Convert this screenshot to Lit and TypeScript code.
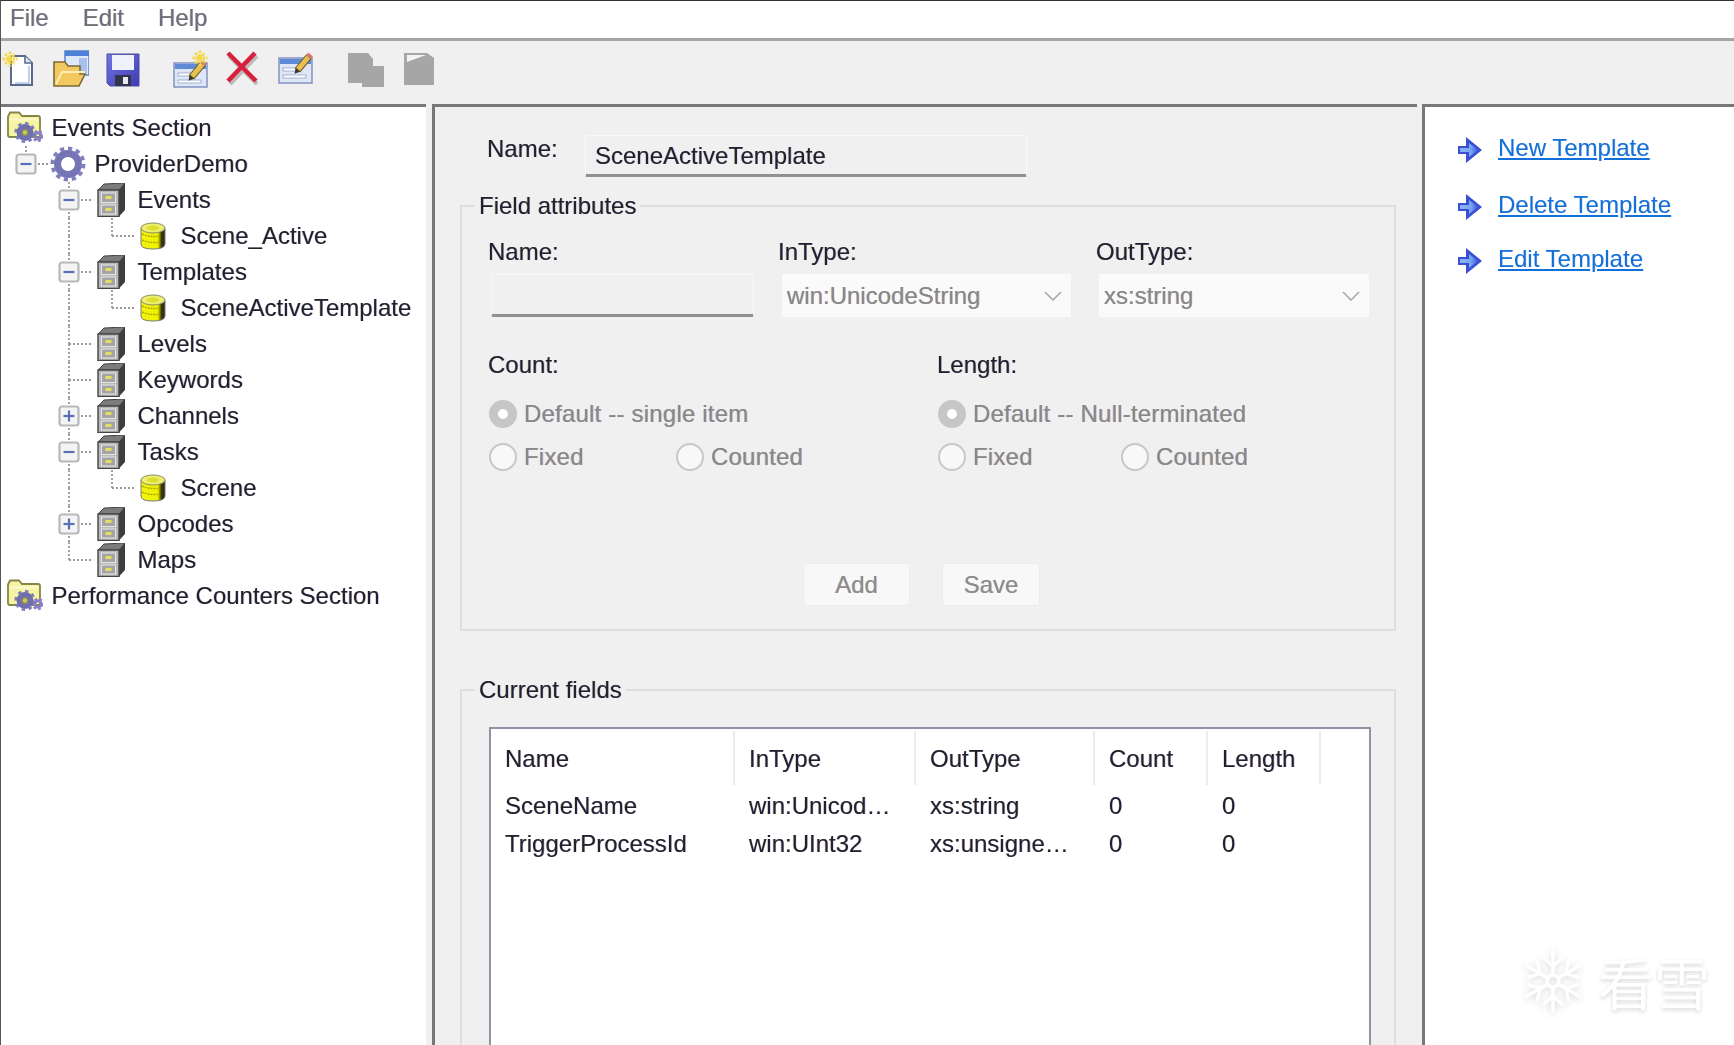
import { LitElement, css, html, svg } from 'lit';
import { customElement } from 'lit/decorators.js';

// tree guide cell: L/T/v are the dotted lines, +/- the expander box
const guide = (code: string) => {
  const kind = code[0] ?? '';
  const box = code[1];
  const up = kind === 'L' || kind === 'T' || kind === 'v';
  const down = kind === 'T' || kind === 'v';
  const right = kind === 'L' || kind === 'T';
  return html`<svg class="cell" width="43" height="36" viewBox="0 0 43 36">
    <g stroke="#9a9a9a" stroke-width="1.8" stroke-dasharray="2 2" fill="none">
      ${up ? svg`<line x1="19" y1="0" x2="19" y2="18"></line>` : ''}
      ${down ? svg`<line x1="19" y1="18" x2="19" y2="36"></line>` : ''}
      ${right ? svg`<line x1="19" y1="18" x2="43" y2="18"></line>` : ''}
    </g>
    ${box
      ? svg`<rect x="9.5" y="8.5" width="19" height="19" rx="2.5" fill="#f4f4f4" stroke="#b8b8b8" stroke-width="2.2"></rect>
        <line x1="13.5" y1="18" x2="24.5" y2="18" stroke="#5b70b4" stroke-width="2.2"></line>
        ${box === '+' ? svg`<line x1="19" y1="12.5" x2="19" y2="23.5" stroke="#5b70b4" stroke-width="2.2"></line>` : ''}`
      : ''}
  </svg>`;
};

const miniGear = svg`
  <circle cx="31" cy="26" r="3.2" fill="none" stroke="#8a7ec8" stroke-width="3"></circle>
  <circle cx="31" cy="26" r="5.2" fill="none" stroke="#8a7ec8" stroke-width="2" pathLength="100" stroke-dasharray="8 8"></circle>
  <circle cx="18" cy="22.5" r="6" fill="#8c8c50" stroke="#6f6fb0" stroke-width="5"></circle>
  <circle cx="18" cy="22.5" r="9.3" fill="none" stroke="#7a7abc" stroke-width="2.6" pathLength="100" stroke-dasharray="6 6.5"></circle>
  <circle cx="18" cy="22.5" r="2.2" fill="#c8c860"></circle>`;

const icons: Record<string, unknown> = {
  folder: html`<svg width="36" height="36" viewBox="0 0 36 36">
    <path d="M1 6.5 L3 2.5 H12 L15 6 H31 Q33 6 33 8 V27 H3 Q1 27 1 25 Z" fill="#f6f3a2" stroke="#85854a" stroke-width="1.8"></path>
    <path d="M3 9.5 H31" stroke="#fbf9cf" stroke-width="2"></path>
    ${miniGear}
  </svg>`,
  gear: html`<svg width="36" height="36" viewBox="0 0 36 36">
    <circle cx="18" cy="18" r="10.5" fill="none" stroke="#7575b6" stroke-width="7"></circle>
    <circle cx="18" cy="18" r="15.5" fill="none" stroke="#8080c0" stroke-width="4" pathLength="100" stroke-dasharray="4.4 3.93"></circle>
  </svg>`,
  cabinet: html`<svg class="inset" width="28" height="34" viewBox="0 0 28 34">
    <path d="M1 7 L7 1 L28 0 L22 7 Z" fill="#7c7c7c" stroke="#444" stroke-width="1"></path>
    <path d="M22 7 L28 0 V27 L22 33.5 Z" fill="#3e3e3e"></path>
    <rect x="1" y="7" width="21" height="26.5" fill="#b8b8b8" stroke="#444" stroke-width="1.4"></rect>
    <rect x="4.5" y="10" width="14" height="9.5" fill="#a4a4a4" stroke="#e6e6e6" stroke-width="1"></rect>
    <rect x="4.5" y="22" width="14" height="9" fill="#a4a4a4" stroke="#e6e6e6" stroke-width="1"></rect>
    <rect x="8.5" y="13" width="6" height="3" fill="#e0e060"></rect>
    <rect x="8.5" y="25" width="6" height="3" fill="#e0e060"></rect>
  </svg>`,
  db: html`<svg class="inset" width="26" height="28" viewBox="0 0 26 28">
    <defs><linearGradient id="dbFill" x1="0" x2="1" y1="0" y2="0">
      <stop offset="0" stop-color="#f4f410"></stop>
      <stop offset=".7" stop-color="#f0f000"></stop>
      <stop offset=".85" stop-color="#3a3a10"></stop>
      <stop offset="1" stop-color="#2a2a10"></stop>
    </linearGradient></defs>
    <path d="M1 6 V22 Q1 27 13 27 Q25 27 25 22 V6 Z" fill="url(#dbFill)" stroke="#777" stroke-width="1"></path>
    <path d="M2 12 Q8 15 18 14.5 M2 18 Q8 21 18 20.5" stroke="#a8a800" stroke-width="1.4" stroke-dasharray="2 1" fill="none"></path>
    <ellipse cx="13" cy="6" rx="12" ry="5" fill="#eded70" stroke="#8c8c6c" stroke-width="1"></ellipse>
    <ellipse cx="13" cy="6" rx="6" ry="2.4" fill="#dede30"></ellipse>
  </svg>`,
};

const tree: { label: string; icon: string; cells: string[] }[] = [
  { label: 'Events Section', icon: 'folder', cells: [] },
  { label: 'ProviderDemo', icon: 'gear', cells: ['L-'] },
  { label: 'Events', icon: 'cabinet', cells: ['', 'T-'] },
  { label: 'Scene_Active', icon: 'db', cells: ['', 'v', 'L'] },
  { label: 'Templates', icon: 'cabinet', cells: ['', 'T-'] },
  { label: 'SceneActiveTemplate', icon: 'db', cells: ['', 'v', 'L'] },
  { label: 'Levels', icon: 'cabinet', cells: ['', 'T'] },
  { label: 'Keywords', icon: 'cabinet', cells: ['', 'T'] },
  { label: 'Channels', icon: 'cabinet', cells: ['', 'T+'] },
  { label: 'Tasks', icon: 'cabinet', cells: ['', 'T-'] },
  { label: 'Screne', icon: 'db', cells: ['', 'v', 'L'] },
  { label: 'Opcodes', icon: 'cabinet', cells: ['', 'T+'] },
  { label: 'Maps', icon: 'cabinet', cells: ['', 'L'] },
  { label: 'Performance Counters Section', icon: 'folder', cells: [] },
];

const sparkle = (x: number, y: number) => svg`
  <g transform="translate(${x} ${y})" stroke="#f4d84a" stroke-width="2.8" stroke-dasharray="2.6 .8">
    <line x1="-7.5" y1="0" x2="7.5" y2="0"></line>
    <line x1="0" y1="-7.5" x2="0" y2="7.5"></line>
    <line x1="-5" y1="-5" x2="5" y2="5"></line>
    <line x1="-5" y1="5" x2="5" y2="-5"></line>
  </g>`;

const pencil = (x: number, y: number) => svg`
  <g transform="translate(${x} ${y}) rotate(40)">
    <rect x="-3" y="-12" width="6" height="17" fill="#e8c050" stroke="#6a5a2a" stroke-width="1"></rect>
    <rect x="-3" y="-15" width="6" height="3.5" fill="#d87868"></rect>
    <path d="M-3 5 L0 10 L3 5 Z" fill="#3a3a2a"></path>
  </g>`;

const formCard = (x: number, y: number, w: number, h: number) => svg`
  <rect x="${x}" y="${y}" width="${w}" height="${h}" fill="#dfe6f6" stroke="#7a8cc0" stroke-width="1.4"></rect>
  <rect x="${x + 1}" y="${y + 1}" width="${w - 2}" height="5" fill="#5f8ad8"></rect>
  <rect x="${x + 4}" y="${y + 10}" width="${w - 16}" height="3" fill="#fff" stroke="#8fa0cc" stroke-width=".8"></rect>
  <rect x="${x + 4}" y="${y + 17}" width="${w - 10}" height="3" fill="#fff" stroke="#8fa0cc" stroke-width=".8"></rect>`;

const tools = [
  html`<svg width="36" height="38" viewBox="0 0 36 38">
    <path d="M10 6 H24 L31 13 V35 H10 Z" fill="#fff" stroke="#5a6a8a" stroke-width="2"></path>
    <path d="M24 6 V13 H31" fill="#dde4f4" stroke="#5a6a8a" stroke-width="1.6"></path>
    <path d="M28 16 V33 H14" stroke="#c4cfea" stroke-width="2" fill="none"></path>
    ${sparkle(9, 9)}
  </svg>`,
  html`<svg width="36" height="38" viewBox="0 0 36 38">
    <rect x="12" y="1" width="24" height="24" fill="#dfe8f8" stroke="#4f78c8" stroke-width="1.4"></rect>
    <rect x="12" y="1" width="24" height="5" fill="#4f80d8"></rect>
    <rect x="26" y="8" width="8" height="15" fill="#a8c0ea"></rect>
    <path d="M1 12 H12 L15 16 H27 V24 H32 L26 36 H1 Z" fill="#f4c860" stroke="#7a6a3a" stroke-width="1.6"></path>
    <path d="M3 34 L9 22 H32" fill="none" stroke="#fdeeb4" stroke-width="2"></path>
  </svg>`,
  html`<svg width="36" height="38" viewBox="0 0 36 38">
    <defs><linearGradient id="floppy" x1="0" x2="1" y1="0" y2="1">
      <stop offset="0" stop-color="#7474e4"></stop>
      <stop offset="1" stop-color="#3c3cb4"></stop>
    </linearGradient></defs>
    <path d="M2 4 H34 V36 H5 L2 33 Z" fill="url(#floppy)" stroke="#4a4aa0" stroke-width="1"></path>
    <rect x="7" y="5" width="22" height="15" fill="#eef0fa"></rect>
    <rect x="10" y="25" width="16" height="11" fill="#33334a"></rect>
    <rect x="18" y="27" width="5" height="7" fill="#e8e8f0"></rect>
  </svg>`,
  html`<svg width="36" height="38" viewBox="0 0 36 38">
    ${formCard(1, 13, 33, 24)}
    ${pencil(22, 23)}
    ${sparkle(27, 8)}
  </svg>`,
  html`<svg width="36" height="38" viewBox="0 0 36 38">
    <path d="M4 4 L32 32 M32 4 L5 32" stroke="#bbb" stroke-width="4" transform="translate(1 2)"></path>
    <path d="M4 3 L32 31 M31 3 L4 31" stroke="#d8203c" stroke-width="4.5"></path>
  </svg>`,
  html`<svg width="36" height="38" viewBox="0 0 36 38">
    ${formCard(1, 8, 33, 25)}
    ${pencil(23, 16)}
  </svg>`,
  html`<svg width="36" height="38" viewBox="0 0 36 38">
    <path d="M0 3 H20 L25 9 V16 H36 V37 H14 V33 H0 Z" fill="#a6a6a6"></path>
  </svg>`,
  html`<svg width="36" height="38" viewBox="0 0 36 38">
    <path d="M3 3 H26 L33 8 V34 Q33 35 32 35 H3 Z" fill="#a6a6a6"></path>
    <path d="M6 5 H25 L6 12 Z" fill="#f4f4f4"></path>
  </svg>`,
];

const arrow = html`<svg class="arrow" width="25" height="26" viewBox="0 0 25 26">
  <defs><linearGradient id="arrowFill" x1="0" x2="1" y1="0" y2="0">
    <stop offset="0" stop-color="#8cb4f6"></stop>
    <stop offset=".6" stop-color="#78a6f6"></stop>
    <stop offset="1" stop-color="#3a58dc"></stop>
  </linearGradient></defs>
  <path d="M1 9 H9 V0 L25 13 L9 26 V17 H1 Z" fill="#3a50d4"></path>
  <path d="M3 11 H12 V6 L21 13 L12 20 V15 H3 Z" fill="url(#arrowFill)"></path>
</svg>`;

const chevron = html`<svg class="chev" width="18" height="10" viewBox="0 0 18 10">
  <path d="M1 1 L9 9 L17 1" fill="none" stroke="#a8a8a8" stroke-width="1.6"></path>
</svg>`;

const flakeArm = svg`<g stroke="#fff" stroke-width="3.4" fill="none">
  <line x1="33" y1="27" x2="33" y2="1"></line>
  <path d="M23 9 L33 18 L43 9"></path>
</g>`;

const columns = ['Name', 'InType', 'OutType', 'Count', 'Length'];
const rows = [
  ['SceneName', 'win:Unicod…', 'xs:string', '0', '0'],
  ['TriggerProcessId', 'win:UInt32', 'xs:unsigne…', '0', '0'],
];
const links = ['New Template', 'Delete Template', 'Edit Template'];

@customElement('app-root')
export class AppRoot extends LitElement {
  static styles = css`
    :host {
      display: flex;
      flex-direction: column;
      width: 1734px;
      height: 1045px;
      overflow: hidden;
      box-sizing: border-box;
      background: #f0f0f0;
      border-top: 1px solid #333;
      border-left: 1px solid #555;
      font: 24px 'Liberation Sans', Arial, sans-serif;
      color: #20202e;
      text-shadow: 0.6px 0 0 rgba(40, 80, 200, 0.3), -0.6px 0 0 rgba(200, 110, 20, 0.3);
      filter: blur(0.55px);
    }

    .menu {
      display: flex;
      gap: 34px;
      height: 37px;
      padding-left: 9px;
      background: #fff;
      color: #6e6e78;
      line-height: 33px;
      border-bottom: 3px solid #a6a6a6;
      box-sizing: content-box;
    }

    .toolbar {
      display: grid;
      grid-template-columns: 52px 52px 68px 51px 54px 70px 53px 36px;
      height: 54px;
      padding: 9px 0 0 0;
      background: #f0f0f0;
    }
    .toolbar svg { display: block; }

    .panes {
      flex: 1;
      display: flex;
      min-height: 0;
    }
    .tree {
      width: 425px;
      flex: none;
      background: #fff;
      border-top: 3px solid #787878;
      padding-top: 3px;
      box-sizing: border-box;
    }
    .mid {
      width: 985px;
      flex: none;
      margin-left: 6px;
      box-sizing: border-box;
      border-top: 3px solid #787878;
      border-left: 3px solid #787878;
      overflow: hidden;
    }
    .side {
      flex: 1;
      position: relative;
      margin-left: 5px;
      padding: 23px 0 0 32px;
      background: #fff;
      border-top: 3px solid #787878;
      border-left: 3px solid #787878;
    }

    .row {
      display: flex;
      align-items: center;
      height: 36px;
      padding-left: 5.5px;
      white-space: nowrap;
    }
    .cell { flex: none; display: block; }
    .ico { flex: none; width: 36px; height: 36px; margin-right: 9px; display: flex; align-items: center; }
    .ico svg { display: block; }
    .ico .inset { margin-left: 4px; }

    .name-row {
      display: flex;
      align-items: center;
      margin: 28px 0 0 52px;
    }
    .name-row label { width: 98px; margin-top: -14px; }
    .input {
      box-sizing: border-box;
      height: 42px;
      padding-left: 9px;
      line-height: 39px;
      background: #f0f0f0;
      border: 1px solid #f8f8f8;
      border-bottom: 3px solid #909090;
      border-radius: 2px;
    }
    .input.main { width: 442px; }
    .input.empty { width: 263px; height: 43px; margin-left: 3px; }

    fieldset {
      box-sizing: border-box;
      width: 936px;
      margin: 15px 0 0 25px;
      padding: 18px 0 0 26px;
      border: 2px solid #dedede;
      min-width: 0;
    }
    legend {
      margin-left: -13px;
      padding: 0 4px;
      line-height: 28px;
    }
    fieldset.attrs { height: 439px; }
    fieldset.current { height: 600px; margin-top: 45px; padding: 23px 0 0 27px; }
    fieldset.current legend { margin-left: -14px; }

    .types {
      display: grid;
      grid-template-columns: 290px 318px 1fr;
      line-height: 28px;
    }
    .types .control { margin-top: 8px; }
    .select {
      box-sizing: border-box;
      display: flex;
      align-items: center;
      justify-content: space-between;
      height: 43px;
      margin-left: 4px;
      padding: 1px 9px 0 5px;
      background: #fafafa;
      color: #888;
    }
    .select.in { width: 289px; }
    .select.out { width: 270px; margin-left: 3px; }

    .opts {
      display: grid;
      grid-template-columns: 449px 1fr;
      margin-top: 34px;
      line-height: 28px;
    }
    .radios {
      display: grid;
      margin-top: 13px;
      grid-auto-rows: 43px;
      align-items: center;
      color: #888;
      letter-spacing: 0.2px;
    }
    .radios.count { grid-template-columns: 187px 1fr; }
    .radios.length { grid-template-columns: 183px 1fr; }
    .radio { display: flex; align-items: center; gap: 7px; margin-left: 1px; white-space: nowrap; }
    .radio.wide { grid-column: 1 / -1; }
    .dot {
      box-sizing: border-box;
      flex: none;
      width: 28px;
      height: 28px;
      border-radius: 50%;
      background: #f8f8f8;
      border: 2px solid #c8c8c8;
    }
    .dot.on {
      background: #fff;
      border: 9px solid #c6c6c6;
    }

    .buttons {
      display: flex;
      gap: 32px;
      margin: 85px 0 0 315px;
    }
    .btn {
      box-sizing: border-box;
      height: 43px;
      line-height: 41px;
      text-align: center;
      background: #f8f8f8;
      border: 1px solid #ececec;
      border-radius: 3px;
      color: #8c8c8c;
    }
    .btn.add { width: 107px; }
    .btn.save { width: 98px; }

    .list {
      box-sizing: border-box;
      width: 882px;
      height: 500px;
      background: #fff;
      border: 2px solid #8f94a4;
      padding-top: 2px;
    }
    .grid {
      display: grid;
      grid-template-columns: 244px 181px 179px 113px 113px;
    }
    .grid > div { padding-left: 14px; white-space: nowrap; }
    .head > div {
      height: 54px;
      line-height: 55px;
      border-right: 2px solid #ececec;
    }
    .body { line-height: 38px; margin-top: 2px; }

    .link { display: flex; height: 54px; }
    .link:first-child { height: 57px; }
    .arrow { margin-top: 7px; flex: none; }
    .link a {
      margin: 0 0 0 16px;
      height: 34px;
      line-height: 36px;
      color: #1270d8;
      text-decoration: underline;
      text-shadow: 0.5px 0 0 rgba(20, 60, 200, 0.25);
    }

    .mark {
      position: absolute;
      right: 24px;
      bottom: 28px;
      display: flex;
      align-items: center;
      gap: 12px;
      color: #fff;
      font: 56px 'Noto Sans CJK SC', sans-serif;
      line-height: 72px;
      text-shadow: 0 2px 4px rgba(0, 0, 0, 0.16);
    }
    .mark svg { filter: drop-shadow(0 2px 3px rgba(0, 0, 0, 0.14)); display: block; }
  `;

  private radio(text: string, on = false, wide = false) {
    return html`<div class="radio ${wide ? 'wide' : ''}"><span class="dot ${on ? 'on' : ''}"></span>${text}</div>`;
  }

  render() {
    return html`
      <div class="menu"><span>File</span><span>Edit</span><span>Help</span></div>
      <div class="toolbar">${tools}</div>
      <div class="panes">
        <div class="tree">
          ${tree.map(
            (n) => html`<div class="row">
              ${n.cells.map((c) => guide(c))}
              <span class="ico">${icons[n.icon]}</span>${n.label}
            </div>`
          )}
        </div>
        <div class="mid">
          <div class="name-row">
            <label>Name:</label>
            <div class="input main">SceneActiveTemplate</div>
          </div>
          <fieldset class="attrs">
            <legend>Field attributes</legend>
            <div class="types">
              <div>
                Name:
                <div class="control input empty"></div>
              </div>
              <div>
                InType:
                <div class="control select in">win:UnicodeString${chevron}</div>
              </div>
              <div>
                OutType:
                <div class="control select out">xs:string${chevron}</div>
              </div>
            </div>
            <div class="opts">
              <div>
                Count:
                <div class="radios count">
                  ${this.radio('Default -- single item', true, true)}
                  ${this.radio('Fixed')}${this.radio('Counted')}
                </div>
              </div>
              <div>
                Length:
                <div class="radios length">
                  ${this.radio('Default -- Null-terminated', true, true)}
                  ${this.radio('Fixed')}${this.radio('Counted')}
                </div>
              </div>
            </div>
            <div class="buttons">
              <div class="btn add">Add</div>
              <div class="btn save">Save</div>
            </div>
          </fieldset>
          <fieldset class="current">
            <legend>Current fields</legend>
            <div class="list">
              <div class="grid head">${columns.map((c) => html`<div>${c}</div>`)}</div>
              <div class="body">
                ${rows.map((r) => html`<div class="grid">${r.map((c) => html`<div>${c}</div>`)}</div>`)}
              </div>
            </div>
          </fieldset>
        </div>
        <div class="side">
          ${links.map((l) => html`<div class="link">${arrow}<a>${l}</a></div>`)}
          <div class="mark">
            <svg width="66" height="70" viewBox="0 0 66 70">
              <g transform="translate(0 2)">
                ${[0, 60, 120, 180, 240, 300].map(
                  (a) => svg`<g transform="rotate(${a} 33 33)">${flakeArm}</g>`
                )}
                <circle cx="33" cy="33" r="6" fill="none" stroke="#fff" stroke-width="3.4"></circle>
              </g>
            </svg>
            <span>看雪</span>
          </div>
        </div>
      </div>
    `;
  }
}
